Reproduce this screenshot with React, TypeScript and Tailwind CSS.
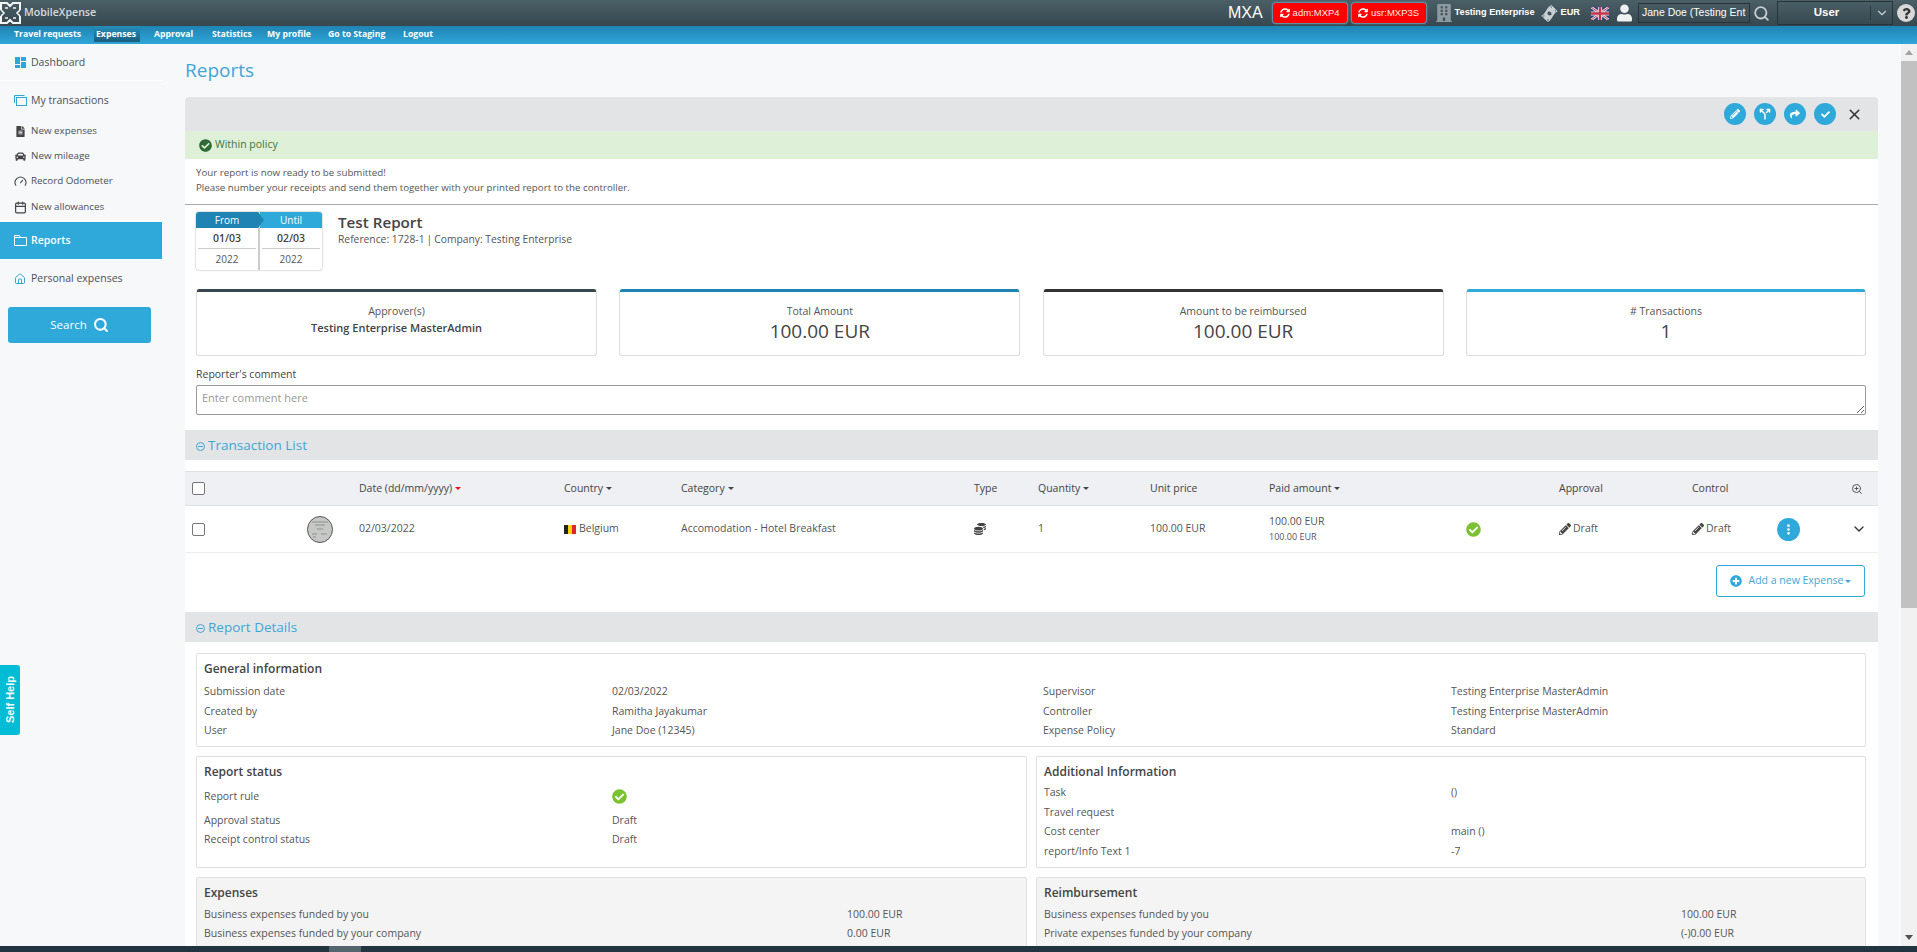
import type { ReactNode } from "react";
import {
  Calendar,
  ChevronDown,
  EllipsisVertical,
  Gauge,
  House,
  Search,
  Split,
  X,
  ZoomIn,
} from "lucide-react";
import {
  FaBuilding,
  FaCar,
  FaCheck,
  FaCheckCircle,
  FaCoins,
  FaFileAlt,
  FaMoneyBillWave,
  FaPencilAlt,
  FaPlusCircle,
  FaQuestion,
  FaShare,
  FaSyncAlt,
  FaUser,
} from "react-icons/fa";

const navItems = [
  { label: "Travel requests", width: "w-[82px]" },
  { label: "Expenses", width: "w-[58px]", active: true },
  { label: "Approval", width: "w-[58px]" },
  { label: "Statistics", width: "w-[55px]" },
  { label: "My profile", width: "w-[61px]" },
  { label: "Go to Staging", width: "w-[75px]" },
  { label: "Logout", width: "w-[50px]" },
];

const tableCols =
  "grid grid-cols-[115px_52px_205px_117px_293px_64px_112px_119px_197px_93px_133px_85px_74px_1fr] items-center pl-[7px]";

const general = [
  ["Submission date", "02/03/2022", "Supervisor", "Testing Enterprise MasterAdmin"],
  ["Created by", "Ramitha Jayakumar", "Controller", "Testing Enterprise MasterAdmin"],
  ["User", "Jane Doe (12345)", "Expense Policy", "Standard"],
];

const additional = [
  ["Task", "()"],
  ["Travel request", ""],
  ["Cost center", "main ()"],
  ["report/Info Text 1", "-7"],
];

function Caret({ red }: { red?: boolean }) {
  return (
    <span
      className={
        red
          ? "ml-[3px] inline-block border-x-[3px] border-t-[3px] border-x-transparent border-t-[#e3141c] align-middle"
          : "ml-[3px] inline-block border-x-[3px] border-t-[3px] border-x-transparent border-t-[#444] align-middle"
      }
    />
  );
}

function Logo() {
  return (
    <svg width="21" height="22" viewBox="0 0 21 22" fill="none" stroke="#f2f5f6" strokeWidth="2">
      <path d="M1 8V1h6l3 3 3-3h7v7" />
      <path d="M1 14v7h6l3-3 3 3h7v-7" />
      <path d="M5 6h3M13 6h3M5 16h3M13 16h3M1 8l3 3-3 3M20 8l-3 3 3 3" strokeWidth="1.6" />
    </svg>
  );
}

function UkFlag() {
  return (
    <svg width="18" height="13" viewBox="0 0 18 13">
      <rect width="18" height="13" fill="#2b3f80" />
      <path d="M0 0l18 13M18 0L0 13" stroke="#e8e8ee" strokeWidth="2.6" />
      <path d="M0 0l18 13M18 0L0 13" stroke="#c4354a" strokeWidth="1" />
      <path d="M9 0v13M0 6.5h18" stroke="#e8e8ee" strokeWidth="4.2" />
      <path d="M9 0v13M0 6.5h18" stroke="#c4354a" strokeWidth="2.4" />
    </svg>
  );
}

function EnvButton({ label }: { label: string }) {
  return (
    <div className="flex h-[20px] w-[74px] items-center justify-center gap-[3px] rounded-[3px] bg-[#ff0000] text-[9.5px] text-[#ffe9e0] shadow-[0_0_0_1px_#5f8ea6,0_0_3px_#8fc3dc]">
      <FaSyncAlt className="h-[10px] w-[10px] text-white" />
      {label}
    </div>
  );
}

function TopBar() {
  return (
    <header className="flex h-[26px] shrink-0 items-center bg-gradient-to-b from-[#4b5f67] to-[#36474e] font-['Liberation_Sans',sans-serif] text-white">
      <div className="flex items-center">
        <Logo />
        <span className="ml-[3px] font-['Open_Sans',sans-serif] text-[10.6px] font-semibold text-[#d5dcdf]">
          MobileXpense
        </span>
      </div>
      <div className="ml-auto flex items-center">
        <span className="text-[16px] leading-none text-white">MXA</span>
        <div className="ml-[10px] flex gap-[5px]">
          <EnvButton label="adm:MXP4" />
          <EnvButton label="usr:MXP3S" />
        </div>
        <FaBuilding className="ml-[10px] h-[18px] w-[16px] text-[#8d9a9f]" />
        <span className="ml-[3px] text-[9.2px] font-bold">Testing Enterprise</span>
        <FaMoneyBillWave className="ml-[7px] h-[15px] w-[15px] -rotate-45 text-[#c8d0d2]" />
        <span className="ml-[4px] text-[9.2px] font-bold">EUR</span>
        <span className="ml-[11px] flex">
          <UkFlag />
        </span>
        <FaUser className="ml-[8px] h-[18px] w-[15px] text-[#eef1f2]" />
        <div className="ml-[6px] flex h-[20px] w-[112px] items-center overflow-hidden whitespace-nowrap border border-[#27343a] pl-[3px] text-[10.5px]">
          Jane Doe (Testing Ent
        </div>
        <Search className="ml-[3px] h-[17px] w-[17px] text-[#c6ced1]" strokeWidth={2.6} />
        <div className="ml-[7px] flex h-[24px] w-[116px] items-center border border-[#27343a] text-[11.5px] font-semibold">
          <span className="flex-1 pl-[5px] text-center">User</span>
          <span className="flex h-[14px] w-[22px] items-center justify-center border-l border-[#2c3a40]">
            <ChevronDown className="h-[14px] w-[14px] text-[#c6ced1]" />
          </span>
        </div>
        <span className="ml-[4px] mr-[2px] flex h-[18px] w-[18px] items-center justify-center rounded-full bg-[#d9d9d9]">
          <FaQuestion className="h-[11px] w-[11px] text-[#333]" />
        </span>
      </div>
    </header>
  );
}

function NavBar() {
  return (
    <nav className="flex h-[18px] shrink-0 items-start bg-gradient-to-b from-[#1f84b3] to-[#2fa6d9] pl-[14px] font-['Open_Sans',sans-serif] text-[8.7px] font-bold text-white">
      {navItems.map((item) => (
        <div key={item.label} className={item.width}>
          <span
            className={
              item.active
                ? "-ml-[2px] block h-[16px] w-[46px] whitespace-nowrap bg-gradient-to-b from-[#2590bd] to-[#1a5e7d] pl-[2px] leading-[16px]"
                : "block h-[16px] whitespace-nowrap leading-[16px]"
            }
          >
            {item.label}
          </span>
        </div>
      ))}
    </nav>
  );
}

function SideLink({ icon, label, h, small }: { icon: ReactNode; label: string; h: string; small?: boolean }) {
  return (
    <div className={`flex items-center pt-px text-[#4a4f55] ${small ? "text-[9.8px]" : "text-[10.5px]"} ${h}`}>
      <span className="flex w-[31px] justify-center pl-[9px]">{icon}</span>
      <span>{label}</span>
    </div>
  );
}

function Sidebar() {
  return (
    <aside className="w-[162px] shrink-0 bg-[#f7f8fa]">
      <div className="h-[37px] border-b border-white">
        <SideLink
          h="h-[36px]"
          label="Dashboard"
          icon={
            <svg width="11" height="11" viewBox="0 0 11 11" fill="#2fa6d9">
              <rect width="5" height="7" />
              <rect x="6" width="5" height="4" />
              <rect y="8" width="5" height="3" />
              <rect x="6" y="5" width="5" height="6" />
            </svg>
          }
        />
      </div>
      <SideLink
        h="h-[38px]"
        label="My transactions"
        icon={
          <svg width="13" height="11" viewBox="0 0 13 11" fill="none" stroke="#2fa6d9">
            <path d="M.5 8V.5h10" />
            <rect x="2.5" y="2.5" width="10" height="8" fill="#f7f8fa" />
          </svg>
        }
      />
      <SideLink small h="h-[24px]" label="New expenses" icon={<FaFileAlt className="h-[11px] w-[9px] text-[#444]" />} />
      <SideLink small h="h-[25px]" label="New mileage" icon={<FaCar className="h-[11px] w-[11px] text-[#444]" />} />
      <SideLink small h="h-[26px]" label="Record Odometer" icon={<Gauge className="h-[13px] w-[13px] text-[#444]" />} />
      <div className="h-[27px] border-b border-white">
        <SideLink small h="h-[26px]" label="New allowances" icon={<Calendar className="h-[13px] w-[13px] text-[#444]" strokeWidth={2.2} />} />
      </div>
      <div className="mt-px flex h-[37px] items-center bg-[#2fa8da] text-[10.5px] font-semibold text-white">
        <span className="flex w-[31px] justify-center pl-[9px]">
          <svg width="13" height="11" viewBox="0 0 13 11" fill="none" stroke="#fff">
            <path d="M.5 10.5V.5h5l1 2h6v8zM.5 2.5h6" />
          </svg>
        </span>
        <span>Reports</span>
      </div>
      <SideLink h="h-[38px]" label="Personal expenses" icon={<House className="h-[12px] w-[12px] text-[#2fa6d9]" />} />
      <button className="ml-2 mt-[10px] flex h-[36px] w-[143px] items-center justify-center gap-[6px] rounded-[3px] bg-[#2fa8da] text-[11.5px] text-white">
        Search
        <Search className="h-[16px] w-[16px]" strokeWidth={3} />
      </button>
    </aside>
  );
}

function RoundAction({ children }: { children: ReactNode }) {
  return (
    <span className="flex h-[22px] w-[22px] items-center justify-center rounded-full bg-[#2fa8da] text-white">
      {children}
    </span>
  );
}

function DateCol({ head, day, dark }: { head: string; day: string; dark?: boolean }) {
  return (
    <div className="flex flex-1 flex-col">
      <div
        className={
          dark
            ? "h-[16px] bg-[#1f84b3] text-center text-[10px] leading-[16px] text-white"
            : "h-[16px] bg-[#2fa8da] text-center text-[10px] leading-[16px] text-white"
        }
      >
        {head}
      </div>
      <div className="mx-[2px] border-b border-[#ccc] py-[3px] text-center text-[10.5px] font-semibold leading-[14px] text-[#444]">
        {day}
      </div>
      <div className="pt-[3px] text-center text-[10px] leading-[14px] text-[#555]">2022</div>
    </div>
  );
}

function SummaryCard({
  top,
  label,
  value,
  big,
  width,
}: {
  top: string;
  label: string;
  value: string;
  big?: boolean;
  width: string;
}) {
  return (
    <div className={`h-[67px] rounded-[3px] border border-t-0 border-[#dcdcdc] bg-white text-center ${width}`}>
      <div className={`h-[3px] rounded-t-[2px] ${top}`} />
      <div className="pt-[12px] text-[10.5px] leading-[15px] text-[#555]">{label}</div>
      <div className={big ? "text-[19px] leading-[24px] text-[#444]" : "pt-[1px] text-[11px] font-semibold leading-[15px] text-[#444]"}>
        {value}
      </div>
    </div>
  );
}

function SectionBar({ title }: { title: string }) {
  return (
    <div className="flex h-[30px] items-center bg-[#e3e4e6] pl-[11px] text-[13.5px] text-[#3ea6d8]">
      <span className="mr-[3px] mt-[2px] flex h-[9px] w-[9px] items-center justify-center rounded-full border border-[#3ea6d8]">
        <span className="h-px w-[5px] bg-[#3ea6d8]" />
      </span>
      {title}
    </div>
  );
}

function TransactionTable() {
  return (
    <div className="mt-[11px] text-[10.5px] text-[#555]">
      <div className={`${tableCols} h-[35px] border-y border-[#dfe1e4] bg-[#eef0f3] text-[#444]`}>
        <span className="h-[13px] w-[13px] rounded-[2px] border border-[#777] bg-white" />
        <span />
        <span>
          Date (dd/mm/yyyy)
          <Caret red />
        </span>
        <span>
          Country
          <Caret />
        </span>
        <span>
          Category
          <Caret />
        </span>
        <span>Type</span>
        <span>
          Quantity
          <Caret />
        </span>
        <span>Unit price</span>
        <span>
          Paid amount
          <Caret />
        </span>
        <span />
        <span>Approval</span>
        <span>Control</span>
        <span />
        <ZoomIn className="h-[12px] w-[12px] text-[#555]" />
      </div>
      <div className={`${tableCols} h-[47px] border-b border-[#eee]`}>
        <span className="h-[13px] w-[13px] rounded-[2px] border border-[#777] bg-white" />
        <svg width="26" height="27" viewBox="0 0 26 27">
          <ellipse cx="13" cy="13.5" rx="12.5" ry="13" fill="#c5c8c4" stroke="#555" />
          <path d="M5 6h16M8 9h10M10 13h6M5 18h5M6 21h3M14 18h6" stroke="#8f938f" fill="none" />
        </svg>
        <span>02/03/2022</span>
        <span className="flex items-center gap-[3px]">
          <svg width="12" height="9" viewBox="0 0 12 9">
            <rect width="4" height="9" fill="#222" />
            <rect x="4" width="4" height="9" fill="#f6d30f" />
            <rect x="8" width="4" height="9" fill="#e0242c" />
          </svg>
          Belgium
        </span>
        <span>Accomodation - Hotel Breakfast</span>
        <FaCoins className="h-[12px] w-[12px] text-[#444]" />
        <span>1</span>
        <span>100.00 EUR</span>
        <span>
          <span className="block leading-[16px]">100.00 EUR</span>
          <span className="block text-[9px] leading-[16px]">100.00 EUR</span>
        </span>
        <FaCheckCircle className="h-[15px] w-[15px] text-[#7ac231]" />
        <span className="flex items-center gap-[2px]">
          <FaPencilAlt className="h-[12px] w-[12px] text-[#444]" />
          Draft
        </span>
        <span className="flex items-center gap-[2px]">
          <FaPencilAlt className="h-[12px] w-[12px] text-[#444]" />
          Draft
        </span>
        <span className="flex h-[23px] w-[23px] items-center justify-center rounded-full bg-[#2fa8da] text-white">
          <EllipsisVertical className="h-[13px] w-[13px]" strokeWidth={3} />
        </span>
        <ChevronDown className="h-[16px] w-[16px] text-[#333]" />
      </div>
      <div className="flex justify-end pr-[13px] pt-[12px]">
        <button className="flex h-[32px] w-[149px] items-center justify-center gap-[7px] rounded-[3px] border border-[#2fa8da] text-[#3ea6d8]">
          <FaPlusCircle className="h-[12px] w-[12px] text-[#2fa8da]" />
          <span>Add a new Expense</span>
          <span className="-ml-[5px] inline-block border-x-[3px] border-t-[3px] border-x-transparent border-t-[#3ea6d8]" />
        </button>
      </div>
    </div>
  );
}

function DetailBox({ title, children, muted, className }: { title: string; children: ReactNode; muted?: boolean; className: string }) {
  return (
    <div className={`rounded-[2px] border border-[#e0e0e0] px-[7px] ${muted ? "bg-[#f4f4f4]" : "bg-white"} ${className}`}>
      <div className="pt-[6px] text-[12px] font-semibold leading-[18px] text-[#444]">{title}</div>
      {children}
    </div>
  );
}

function ReportDetails() {
  return (
    <div className="mt-[11px] flex flex-col gap-[9px] pl-[11px] pr-[12px] text-[10.5px] text-[#555]">
      <DetailBox title="General information" className="h-[94px]">
        <div className="mt-[4px] grid grid-cols-[408px_431px_408px_1fr] leading-[19.5px]">
          {general.flat().map((cell, i) => (
            <span key={i}>{cell}</span>
          ))}
        </div>
      </DetailBox>
      <div className="grid grid-cols-[831px_1fr] gap-x-[9px]">
        <DetailBox title="Report status" className="h-[112px]">
          <div className="grid grid-cols-[408px_1fr] items-center leading-[19px]">
            <span className="mt-[6px]">Report rule</span>
            <FaCheckCircle className="mt-[6px] h-[15px] w-[15px] text-[#7ac231]" />
            <span className="mt-[5px]">Approval status</span>
            <span className="mt-[5px]">Draft</span>
            <span>Receipt control status</span>
            <span>Draft</span>
          </div>
        </DetailBox>
        <DetailBox title="Additional Information" className="h-[112px]">
          <div className="mt-[2px] grid grid-cols-[407px_1fr] leading-[19.5px]">
            {additional.flat().map((cell, i) => (
              <span key={i} className="min-h-[19.5px]">
                {cell}
              </span>
            ))}
          </div>
        </DetailBox>
      </div>
      <div className="grid grid-cols-[831px_1fr] gap-x-[9px]">
        <DetailBox title="Expenses" muted className="h-[80px]">
          <div className="mt-[3px] grid grid-cols-[643px_1fr] leading-[19px]">
            <span>Business expenses funded by you</span>
            <span>100.00 EUR</span>
            <span>Business expenses funded by your company</span>
            <span>0.00 EUR</span>
          </div>
        </DetailBox>
        <DetailBox title="Reimbursement" muted className="h-[80px]">
          <div className="mt-[3px] grid grid-cols-[637px_1fr] leading-[19px]">
            <span>Business expenses funded by you</span>
            <span>100.00 EUR</span>
            <span>Private expenses funded by your company</span>
            <span>(-)0.00 EUR</span>
          </div>
        </DetailBox>
      </div>
    </div>
  );
}

function ReportPanel() {
  return (
    <section className="rounded-t-[4px] bg-white">
      <div className="flex h-[34px] items-center justify-end gap-[8px] rounded-t-[4px] bg-[#e3e4e6] pr-[15px]">
        <RoundAction>
          <FaPencilAlt className="h-[10px] w-[10px]" />
        </RoundAction>
        <RoundAction>
          <Split className="h-[12px] w-[12px]" strokeWidth={3} />
        </RoundAction>
        <RoundAction>
          <FaShare className="h-[10px] w-[10px]" />
        </RoundAction>
        <RoundAction>
          <FaCheck className="h-[9px] w-[9px]" />
        </RoundAction>
        <X className="ml-[2px] h-[17px] w-[17px] text-[#333]" strokeWidth={2.2} />
      </div>
      <div className="flex h-[28px] items-center bg-[#dff0d8] pl-[14px] text-[10.5px] text-[#3c763d]">
        <FaCheckCircle className="mr-[3px] h-[13px] w-[13px] text-[#2f6b36]" />
        Within policy
      </div>
      <div className="h-[46px] border-b border-[#aaa] pl-[11px] pt-[6px] text-[9.75px] leading-[15px] text-[#555]">
        <p>Your report is now ready to be submitted!</p>
        <p>Please number your receipts and send them together with your printed report to the controller.</p>
      </div>
      <div className="flex pl-[11px] pr-[12px] pt-[7px]">
        <div className="relative flex h-[58px] w-[126px] overflow-hidden rounded-[3px] shadow-[0_0_2px_#999]">
          <DateCol dark head="From" day="01/03" />
          <div className="w-[2px] bg-[#ccc]" />
          <DateCol head="Until" day="02/03" />
          <span className="absolute left-[62px] top-0 border-y-[8px] border-l-[6px] border-y-transparent border-l-[#1f84b3]" />
        </div>
        <div className="ml-[16px]">
          <h2 className="pt-[1px] text-[15.2px] font-semibold leading-[19px] text-[#444]">Test Report</h2>
          <p className="text-[10.3px] leading-[14px] text-[#555]">
            Reference: 1728-1<span className="mx-[2px]">|</span>Company: Testing Enterprise
          </p>
        </div>
      </div>
      <div className="mt-[19px] flex justify-between pl-[11px] pr-[12px]">
        <SummaryCard width="w-[401px]" top="bg-[#37474f]" label="Approver(s)" value="Testing Enterprise MasterAdmin" />
        <SummaryCard width="w-[401px]" top="bg-[#1f84b3]" label="Total Amount" value="100.00 EUR" big />
        <SummaryCard width="w-[401px]" top="bg-[#333]" label="Amount to be reimbursed" value="100.00 EUR" big />
        <SummaryCard width="w-[400px]" top="bg-[#2fa8da]" label="# Transactions" value="1" big />
      </div>
      <div className="pl-[11px] pr-[12px] pt-[8px]">
        <label className="block text-[10.5px] leading-[21px] text-[#444]">Reporter's comment</label>
        <textarea
          placeholder="Enter comment here"
          className="block h-[30px] w-full resize-y rounded-[2px] border border-[#999] px-[5px] py-[4px] text-[11px] leading-[16px] outline-none placeholder:text-[#999]"
        />
      </div>
      <div className="mt-[15px]">
        <SectionBar title="Transaction List" />
      </div>
      <TransactionTable />
      <div className="mt-[15px]">
        <SectionBar title="Report Details" />
      </div>
      <ReportDetails />
    </section>
  );
}

export default function App() {
  return (
    <div className="relative flex h-[952px] flex-col overflow-hidden bg-[#f7f8fa] font-['Open_Sans',sans-serif]">
      <TopBar />
      <NavBar />
      <div className="flex min-h-0 flex-1">
        <Sidebar />
        <main className="min-w-0 flex-1 overflow-hidden pl-[23px] pr-[23px]">
          <h1 className="flex h-[53px] items-center text-[19px] text-[#3ea6d8]">Reports</h1>
          <ReportPanel />
        </main>
        <div className="flex w-[16px] shrink-0 flex-col bg-[#f1f1f1]">
          <span className="flex h-[17px] items-center justify-center text-[#a3a3a3]">
            <span className="border-x-[4px] border-b-[5px] border-x-transparent border-b-[#a3a3a3]" />
          </span>
          <span className="h-[547px] bg-[#c1c1c1]" />
          <span className="mt-auto flex h-[17px] items-center justify-center">
            <span className="border-x-[4px] border-t-[5px] border-x-transparent border-t-[#505050]" />
          </span>
        </div>
      </div>
      <div className="h-[6px] shrink-0 bg-[#21343f] pl-[329px]">
        <div className="h-full w-[32px] bg-[#55656d]" />
      </div>
      <div className="absolute left-0 top-[665px] flex h-[70px] w-[20px] items-center justify-center rounded-r-[3px] bg-[#00bcd4] font-['Liberation_Sans',sans-serif] text-[11px] font-bold text-white">
        <span className="rotate-180 whitespace-nowrap [writing-mode:vertical-rl]">Self Help</span>
      </div>
    </div>
  );
}
